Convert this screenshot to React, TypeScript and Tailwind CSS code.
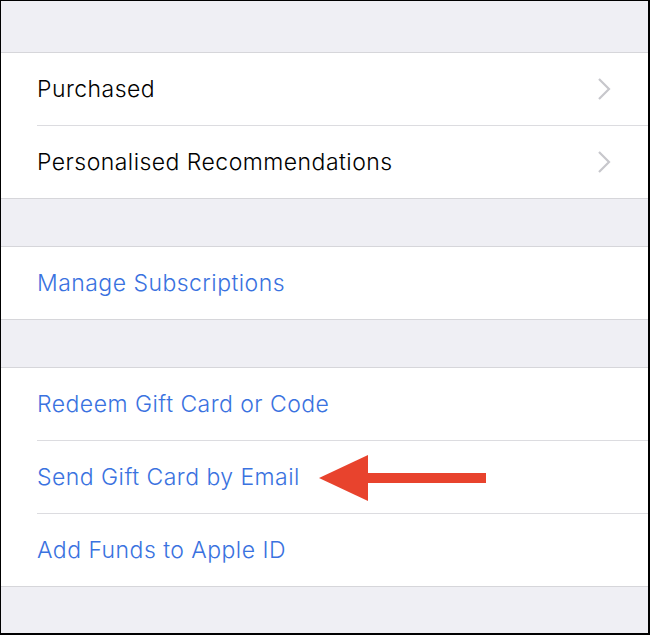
import React from "react";

type Row = { label: string; blue?: boolean; chevron?: boolean };

const groups: Row[][] = [
  [
    { label: "Purchased", chevron: true },
    { label: "Personalised Recommendations", chevron: true },
  ],
  [{ label: "Manage Subscriptions", blue: true }],
  [
    { label: "Redeem Gift Card or Code", blue: true },
    { label: "Send Gift Card by Email", blue: true },
    { label: "Add Funds to Apple ID", blue: true },
  ],
];

function Chevron() {
  return (
    <svg width="16" height="24" viewBox="0 0 16 24" className="mr-[36px]">
      <path d="M3 2 L13 12 L3 22" fill="none" stroke="#c7c7cc" strokeWidth="2.2" />
    </svg>
  );
}

function SettingsRow({ row, last }: { row: Row; last: boolean }) {
  return (
    <div className="pl-[36px] bg-white">
      <div
        className={`flex items-center justify-between ${
          last ? "h-[72px]" : "h-[73px] border-b border-[#dcdce0]"
        }`}
      >
        <span
          className={`text-[23px] tracking-[0.02em] font-[350] ${
            row.blue ? "text-[#3a72e0]" : "text-black"
          }`}
        >
          {row.label}
        </span>
        {row.chevron && <Chevron />}
      </div>
    </div>
  );
}

export default function App() {
  return (
    <div
      className="relative w-[650px] h-[635px] overflow-hidden bg-[#efeff4] border-l border-t border-r-2 border-b-2 border-black flex flex-col"
      style={{ fontFamily: "Inter, 'Open Sans', sans-serif" }}
    >
      {groups.map((g, gi) => (
        <React.Fragment key={gi}>
          <div className={`${gi === 0 ? "h-[51px]" : "h-[47px]"} shrink-0`} />
          <div className="border-y border-[#d6d6da] shrink-0">
            {g.map((r, ri) => (
              <SettingsRow key={r.label} row={r} last={ri === g.length - 1} />
            ))}
          </div>
        </React.Fragment>
      ))}

      {/* red annotation arrow */}
      <svg
        className="absolute left-[316px] top-[452px]"
        width="172"
        height="52"
        viewBox="0 0 172 52"
      >
        <polygon points="2,25 51,2 51,48" fill="#e8432d" />
        <rect x="49" y="20" width="120" height="10" fill="#e8432d" />
      </svg>
    </div>
  );
}
